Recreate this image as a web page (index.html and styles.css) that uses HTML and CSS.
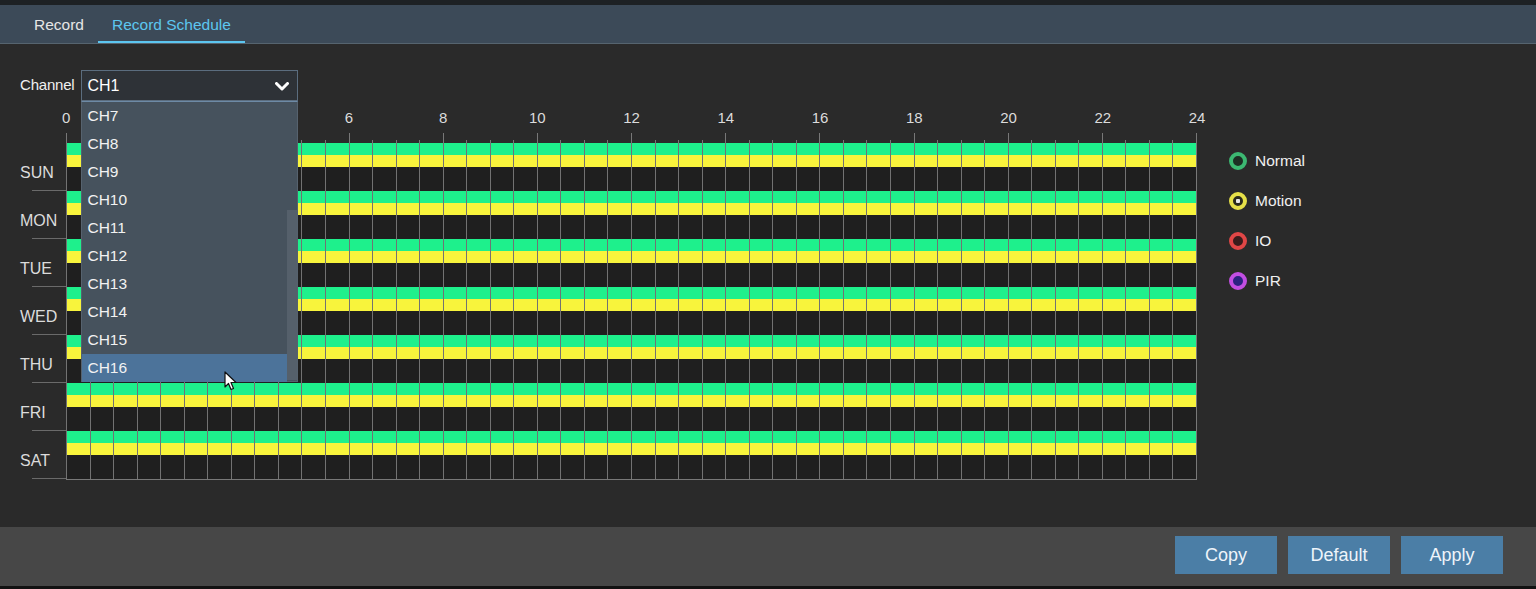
FILE: index.html
```html
<!DOCTYPE html>
<html lang="en">
<head>
  <meta charset="UTF-8" />
  <meta name="viewport" content="width=device-width, initial-scale=1" />
  <title>Record Schedule</title>
  <link rel="stylesheet" href="styles.css">
</head>
<body>

<div class="page">
  <div class="topline"></div>

  <nav class="tabs">
    <a class="tab">Record</a>
    <a class="tab active">Record Schedule</a>
  </nav>

  <main class="content">
    <div class="channel-row">
      <label>Channel</label>
      <div class="select">
        <div class="select-box">
          <span>CH1</span>
          <svg class="chevron" width="14" height="9" viewBox="0 0 14 9">
            <polyline points="1.5,1.5 7,7 12.5,1.5" fill="none" stroke="#fff" stroke-width="3" stroke-linecap="round" stroke-linejoin="round"/>
          </svg>
        </div>

        <!-- open channel list -->
        <div class="dropdown">
          <ul>
            <li>CH7</li>
            <li>CH8</li>
            <li>CH9</li>
            <li>CH10</li>
            <li>CH11</li>
            <li>CH12</li>
            <li>CH13</li>
            <li>CH14</li>
            <li>CH15</li>
            <li class="hover">CH16</li>
          </ul>
          <div class="scrollbar"><div class="thumb"></div></div>
          <svg class="cursor" width="13" height="20" viewBox="0 0 13 20">
            <path d="M1 1 L1 16 L4.5 12.5 L7 18.5 L9.5 17.5 L7 11.5 L12 11.5 Z" fill="#fff" stroke="#111" stroke-width="1.2" stroke-linejoin="round"/>
          </svg>
        </div>
      </div>
    </div>

    <div class="schedule">
      <div class="days">
        <div class="day"><span>SUN</span></div>
        <div class="day"><span>MON</span></div>
        <div class="day"><span>TUE</span></div>
        <div class="day"><span>WED</span></div>
        <div class="day"><span>THU</span></div>
        <div class="day"><span>FRI</span></div>
        <div class="day"><span>SAT</span></div>
      </div>

      <div class="chart">
        <div class="hours">
          <span>0</span><span>2</span><span>4</span><span>6</span><span>8</span><span>10</span><span>12</span>
          <span>14</span><span>16</span><span>18</span><span>20</span><span>22</span><span>24</span>
        </div>
        <div class="ticks"></div>
        <div class="grid">
          <div class="row"></div>
          <div class="row"></div>
          <div class="row"></div>
          <div class="row"></div>
          <div class="row"></div>
          <div class="row"></div>
          <div class="row"></div>
        </div>
      </div>

      <ul class="legend">
        <li><i class="ring normal"></i>Normal</li>
        <li><i class="ring motion"></i>Motion</li>
        <li><i class="ring io"></i>IO</li>
        <li><i class="ring pir"></i>PIR</li>
      </ul>
    </div>
  </main>

  <footer class="actions">
    <button>Copy</button>
    <button>Default</button>
    <button>Apply</button>
  </footer>
</div>

</body>
</html>
```

FILE: styles.css
```css
:root {
  --bg: #2a2a2a; --tabbar: #3c4a58; --accent: #5cc6f0;
  --text: #e8e8e8; --line: #787878;
  --green: #1ef08c; --yellow: #f8f43c; --cell: #1f1f1f;
  --btn: #4b7ea6;
}
* { box-sizing: border-box; }
body {
  margin: 0; background: var(--bg); color: var(--text);
  font-family: "Liberation Sans", Arial, sans-serif;
}
.page { display: flex; flex-direction: column; height: 100vh; }
.topline { height: 5px; background: #1d2124; }

.tabs {
  display: flex; height: 39px; padding-left: 20px;
  background: var(--tabbar); border-bottom: 1px solid #56646f;
}
.tab {
  display: flex; align-items: center; padding: 1px 14px 0;
  font-size: 15.5px; color: #e6e6e6;
}
.tab.active { color: var(--accent); border-bottom: 2px solid var(--accent); padding-top: 3px; }

.content { flex: 1; padding: 26px 0 0 20px; }

.channel-row { display: flex; align-items: center; gap: 7px; height: 31px; }
.channel-row label { font-size: 15px; color: #f0f0f0; margin-top: -2px; letter-spacing: -0.2px; }
.select { position: relative; width: 217px; }
.select-box {
  display: flex; align-items: center; justify-content: space-between;
  height: 31px; padding: 0 8px 0 5px;
  background: #2e3237; border: 1px solid #5b6d7f;
  font-size: 16px; color: #fff;
}
.chevron { margin-top: 1px; }

.dropdown {
  position: absolute; top: 31px; left: 0; z-index: 5;
  width: 217px; height: 281px; display: flex;
  background: #46525d; border: 1px solid #56626e; border-top-color: #6d8aa6;
}
.dropdown ul { list-style: none; margin: 0; padding: 0; flex: 1; }
.dropdown li {
  height: 28px; line-height: 28px; padding-left: 5px;
  font-size: 15.5px; color: #f2f2f2;
}
.dropdown li.hover { background: #4c739a; }
.scrollbar { width: 10px; padding-top: 108px; background: #46525d; }
.thumb { height: 170px; background: #55606b; }
.cursor { position: absolute; left: 142px; top: 269px; }

.schedule { display: flex; margin-top: 8px; }
.days { width: 46px; padding-top: 34px; }
.day {
  height: 48px; margin-left: 12px; padding-top: 21px;
  border-bottom: 1px solid #6a6a6a;
  font-size: 16px; line-height: 18px; color: #dcdcdc;
}
.day span { margin-left: -12px; }

.chart { width: 1131px; }
.hours { display: flex; margin: 0 -47.08px 6px; height: 18px; }
.hours span { flex: 1; text-align: center; font-size: 15px; line-height: 18px; color: #dcdcdc; }
.ticks {
  height: 10px; border-right: 1px solid var(--line);
  background:
    repeating-linear-gradient(to right, var(--line) 0 1px, transparent 1px 94.1667px),
    repeating-linear-gradient(to right, var(--line) 0 1px, transparent 1px 23.5417px) 0 7px / 100% 3px no-repeat;
}
.grid { border-bottom: 1px solid var(--line); }
.row {
  height: 48px; border-right: 1px solid var(--line);
  background:
    repeating-linear-gradient(to right, #727272 0 1px, transparent 1px 23.5417px),
    linear-gradient(to bottom, var(--green) 0 12px, var(--yellow) 12px 24px, var(--cell) 24px);
}

.legend { list-style: none; margin: 0 0 0 32px; padding: 43px 0 0; }
.legend li {
  display: flex; align-items: center; gap: 8px;
  height: 18px; margin-bottom: 22px; font-size: 15.5px; color: #f0f0f0;
}
.ring {
  width: 18px; height: 18px; border-radius: 50%;
  border: 4.5px solid; background: #1c1c1c;
}
.ring.normal { border-color: #3cb872; background: #1d2e24; }
.ring.motion { border-color: #e6e048; background: radial-gradient(circle, #e8e8e8 0 2px, #2a2a1c 2.5px); }
.ring.io { border-color: #e04646; background: #3a1c1c; }
.ring.pir { border-color: #c24ee2; background: #2a2280; }

.actions {
  display: flex; justify-content: flex-end; align-items: center; gap: 11px;
  height: 62px; padding: 0 33px 3px 0;
  background: #474747; border-bottom: 3px solid #121212;
}
.actions button {
  width: 102px; height: 38px; border: none;
  background: var(--btn); color: #eef4fa;
  font-family: inherit; font-size: 18px;
}
```
